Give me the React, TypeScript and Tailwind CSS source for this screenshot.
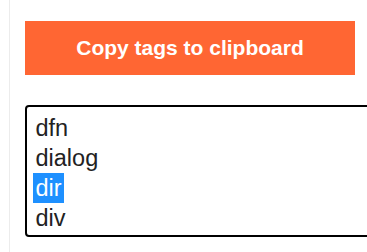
export default function App() {
  const items = ["dfn", "dialog", "dir", "div"];
  return (
    <div className="w-[367px] h-[252px] bg-white overflow-hidden font-['Liberation_Sans',Arial,sans-serif]">
      <div className="ml-[9px] border-l border-[#ececec] h-full pl-[15px] pt-[21px]">
        <button className="w-[330px] h-[54px] bg-[#ff6633] text-white font-bold text-[21px] flex items-center justify-center">
          Copy tags to clipboard
        </button>
        <div className="mt-[30px] w-[400px] h-[132px] border-2 border-black rounded-[4px] pt-[6px] pl-[6px] text-[23.5px] text-[#222] overflow-hidden">
          {items.map((it) => (
            <div key={it} className="h-[30px] leading-[30px]">
              <span
                className={
                  it === "dir"
                    ? "inline-block h-[30px] px-[2.5px] bg-[#1e90ff] text-white"
                    : "inline-block h-[30px] px-[2.5px]"
                }
              >
                {it}
              </span>
            </div>
          ))}
        </div>
      </div>
    </div>
  );
}
